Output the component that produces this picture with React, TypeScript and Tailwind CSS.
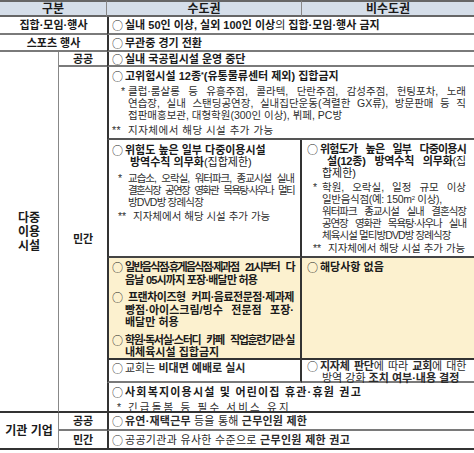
import React from "react";
import clsx from "clsx";

type Kids = { children?: React.ReactNode; className?: string };

// ○ bullet with hanging indent
const Circle = ({ children, className }: Kids) => (
  <div className={clsx("flex", className)}>
    <span className="w-[13px] shrink-0 font-['Noto_Sans_CJK_KR',sans-serif] text-[11px] font-normal">○</span>
    <div className="min-w-0 flex-1">{children}</div>
  </div>
);

const Line = ({ children, className }: Kids) => (
  <div className={clsx("whitespace-nowrap", className)}>{children}</div>
);

// full line spread edge to edge, like the justified lines of the source document
const Just = ({ children, className }: Kids) => (
  <div className={clsx("whitespace-nowrap text-justify [text-align-last:justify]", className)}>{children}</div>
);

const Note = ({ mark = "*", markW, children, className }: Kids & { mark?: string; markW: string }) => (
  <div className={clsx("flex font-normal text-[#2e2e2e]", className)}>
    <span className={clsx("shrink-0", markW)}>{mark}</span>
    <div className="min-w-0 flex-1">{children}</div>
  </div>
);

const B = ({ children }: Kids) => <span className="font-bold">{children}</span>;

export default function App() {
  return (
    <div className="h-[453px] w-[474px] overflow-hidden bg-white font-['Liberation_Sans','Noto_Sans_CJK_KR',sans-serif] text-[11px] leading-[12px] text-[#1a1a1a]">
      <div className="grid grid-cols-[59px_48px_195px_172px] grid-rows-[17px_18px_17px_15px_73px_118px_102px_23px_30px_18px_19px]">
        {/* header */}
        <div className="col-span-2 col-start-1 row-start-1 flex items-center justify-center border-y-2 border-r border-y-[#666] border-r-[#888] bg-[#d5dee9] text-[12px] font-bold">
          구분
        </div>
        <div className="col-start-3 row-start-1 flex items-center justify-center border-y-2 border-r border-y-[#666] border-r-[#888] bg-[#d5dee9] text-[12px] font-bold">
          수도권
        </div>
        <div className="col-start-4 row-start-1 flex items-center justify-center border-y-2 border-y-[#666] bg-[#d5dee9] text-[12px] font-bold">
          비수도권
        </div>

        {/* 집합·모임·행사 */}
        <div className="col-span-2 col-start-1 row-start-2 flex items-center justify-center border-b-2 border-b-[#7a7a7a] font-bold">
          집합·모임·행사
        </div>
        <div className="col-span-2 col-start-3 row-start-2 flex items-center border-b-2 border-l-2 border-b-[#7a7a7a] border-l-[#333] pl-[3px] font-bold">
          <Circle>
            실내 50인 이상, 실외 100인 이상<span className="font-normal">의</span> 집합·모임·행사 금지
          </Circle>
        </div>

        {/* 스포츠 행사 */}
        <div className="col-span-2 col-start-1 row-start-3 flex items-center justify-center border-b-2 border-b-[#7a7a7a] font-bold">
          스포츠 행사
        </div>
        <div className="col-span-2 col-start-3 row-start-3 flex items-center border-b-2 border-l-2 border-b-[#7a7a7a] border-l-[#333] pl-[3px] font-bold">
          <Circle>무관중 경기 전환</Circle>
        </div>

        {/* 다중이용시설 */}
        <div className="col-start-1 row-span-6 row-start-4 flex flex-col items-center justify-center border-r border-b-2 border-r-[#888] border-b-[#333] text-[12px] leading-[14px] font-bold">
          <span>다중</span>
          <span>이용</span>
          <span>시설</span>
        </div>
        <div className="col-start-2 row-start-4 flex items-center justify-center border-b-2 border-b-[#7a7a7a] font-bold">
          공공
        </div>
        <div className="col-span-2 col-start-3 row-start-4 flex items-center border-b-2 border-l-2 border-b-[#7a7a7a] border-l-[#333] pl-[3px] font-bold">
          <Circle>실내 국공립시설 운영 중단</Circle>
        </div>

        <div className="col-start-2 row-span-5 row-start-5 flex items-center justify-center border-b-2 border-b-[#333] font-bold">
          민간
        </div>

        {/* 고위험시설 */}
        <div className="col-span-2 col-start-3 row-start-5 border-b-2 border-l-2 border-b-[#555] border-l-[#333] pt-[3px] pr-[8px] pl-[3px]">
          <Circle className="font-bold">
            고위험시설 12종<sup className="text-[7px]">*</sup>(유통물류센터 제외) 집합금지
          </Circle>
          <Note markW="w-[7px]" className="mt-[3px] ml-[9px] text-[10.5px] leading-[12px]">
            <Just>클럽·룸살롱 등 유흥주점, 콜라텍, 단란주점, 감성주점, 헌팅포차, 노래</Just>
            <Just>연습장, 실내 스탠딩공연장, 실내집단운동(격렬한 GX류), 방문판매 등 직</Just>
            <Line>접판매홍보관, 대형학원(300인 이상), 뷔페, PC방</Line>
          </Note>
          <Note mark="**" markW="w-[16px]" className="mt-[3px] text-[10.5px] leading-[12px] tracking-[0.5px]">
            지자체에서 해당 시설 추가 가능
          </Note>
        </div>

        {/* 위험도 높은 일부 다중이용시설 */}
        <div className="col-start-3 row-start-6 border-r-2 border-b-2 border-l-2 border-r-[#333] border-b-[#444] border-l-[#333] pt-[4px] pr-[6px] pl-[3px]">
          <Circle className="font-bold">
            <Line>위험도 높은 일부 다중이용시설</Line>
            <Line className="pl-[5px]">
              방역수칙 의무화<span className="font-normal">(집합제한)</span>
            </Line>
          </Circle>
          <Note markW="w-[10px]" className="mt-[4px] ml-[6px] text-[10.5px] leading-[12px]">
            <Just className="tracking-[-1px]">교습소, 오락실, 워터파크, 종교시설 실내</Just>
            <Just className="tracking-[-1.7px]">결혼식장 공연장 영화관 목욕탕·사우나 멀티</Just>
            <Line className="tracking-[-0.8px]">방DVD방 장례식장</Line>
          </Note>
          <Note mark="**" markW="w-[15px]" className="mt-[2px] ml-[6px] text-[10.5px] leading-[12px]">
            지자체에서 해당 시설 추가 가능
          </Note>
        </div>
        <div className="col-start-4 row-start-6 border-b-2 border-b-[#444] pt-[3px] pr-[8px] pl-[5px]">
          <Circle className="font-bold">
            <Just className="tracking-[-0.8px]">위험도가 높은 일부 다중이용시</Just>
            <Just className="pl-[7px] tracking-[-0.2px]">
              설(12종) 방역수칙 의무화<span className="font-normal">(집</span>
            </Just>
            <Line className="pl-[2px] font-normal">합제한)</Line>
          </Circle>
          <Note markW="w-[9px]" className="mt-[2px] ml-[6px] text-[10.5px] leading-[12px]">
            <Just>학원, 오락실, 일정 규모 이상</Just>
            <Line className="tracking-[-0.3px]">
              일반음식점(예: 150m<sup className="text-[6px]">2</sup> 이상),
            </Line>
            <Just className="tracking-[-1px]">워터파크 종교시설 실내 결혼식장</Just>
            <Just className="tracking-[-1.1px]">공연장 영화관 목욕탕·사우나 실내</Just>
            <Line className="tracking-[-0.9px]">체육시설 멀티방DVD방 장례식장</Line>
          </Note>
          <Note mark="**" markW="w-[15px]" className="mt-[1px] ml-[6px] text-[10.5px] leading-[12px]">
            지자체에서 해당 시설 추가 가능
          </Note>
        </div>

        {/* 영업시간 제한 (노란 칸) */}
        <div className="col-start-3 row-start-7 border-r-2 border-b-2 border-l-2 border-r-[#333] border-b-[#333] border-l-[#333] bg-[#fcf1cf] pt-[3px] pr-[6px] pl-[3px] leading-[12.5px] font-bold">
          <Circle>
            <Just className="tracking-[-1.7px]">일반음식점·휴게음식점·제과점 21시부터 다</Just>
            <Line className="tracking-[-0.8px]">음날 05시까지 포장·배달만 허용</Line>
          </Circle>
          <Circle className="mt-[5px]">
            <Just className="pl-[3px] tracking-[-0.5px]">프랜차이즈형 커피·음료전문점·제과제</Just>
            <Just>빵점·아이스크림/빙수 전문점 포장·</Just>
            <Line>배달만 허용</Line>
          </Circle>
          <Circle className="mt-[5px]">
            <Just className="tracking-[-1.3px]">학원·독서실·스터디 카페 직업훈련기관·실</Just>
            <Line>내체육시설 집합금지</Line>
          </Circle>
        </div>
        <div className="col-start-4 row-start-7 border-b-2 border-b-[#333] bg-[#fcf1cf] pt-[3px] pl-[5px] leading-[12.5px] font-bold">
          <Circle>해당사항 없음</Circle>
        </div>

        {/* 교회 */}
        <div className="col-start-3 row-start-8 border-r-2 border-b-2 border-l-2 border-r-[#333] border-b-[#7a7a7a] border-l-[#333] pt-[2px] pl-[3px] text-[#2a2a2a]">
          <Circle>
            교회는 <B>비대면 예배로 실시</B>
          </Circle>
        </div>
        <div className="col-start-4 row-start-8 border-b-2 border-b-[#7a7a7a] pr-[8px] pl-[5px] text-[#2a2a2a]">
          <Circle>
            <Just className="tracking-[-0.3px]">
              <B>지자체 판단</B>에 따라 <B>교회</B>에 대한
            </Just>
            <Line className="pl-[2px]">
              방역 강화 <B>조치 여부·내용 결정</B>
            </Line>
          </Circle>
        </div>

        {/* 사회복지 */}
        <div className="col-span-2 col-start-3 row-start-9 border-b-2 border-l-2 border-b-[#333] border-l-[#333] pt-[3px] pl-[3px]">
          <Circle className="font-bold tracking-[1.2px]">사회복지이용시설 및 어린이집 휴관·휴원 권고</Circle>
          <Note markW="w-[11px]" className="mt-[3px] ml-[5px] text-[10.5px] leading-[12px] tracking-[2.2px]">
            긴급돌봄 등 필수 서비스 유지
          </Note>
        </div>

        {/* 기관 기업 */}
        <div className="col-start-1 row-span-2 row-start-10 flex items-center justify-center border-r border-b-2 border-r-[#888] border-b-[#333] text-[12px] font-bold">
          기관 기업
        </div>
        <div className="col-start-2 row-start-10 flex items-center justify-center border-b-2 border-b-[#7a7a7a] font-bold">
          공공
        </div>
        <div className="col-span-2 col-start-3 row-start-10 flex items-center border-b-2 border-l-2 border-b-[#7a7a7a] border-l-[#333] pl-[3px] tracking-[0.2px] text-[#2a2a2a]">
          <Circle>
            <B>유연·재택근무</B> 등을 통해 <B>근무인원 제한</B>
          </Circle>
        </div>
        <div className="col-start-2 row-start-11 flex items-center justify-center border-b-2 border-b-[#333] font-bold">
          민간
        </div>
        <div className="col-span-2 col-start-3 row-start-11 flex items-center border-b-2 border-l-2 border-b-[#333] border-l-[#333] pl-[3px] tracking-[0.3px] text-[#2a2a2a]">
          <Circle>
            공공기관과 유사한 수준으로 <B>근무인원 제한 권고</B>
          </Circle>
        </div>
      </div>
    </div>
  );
}
